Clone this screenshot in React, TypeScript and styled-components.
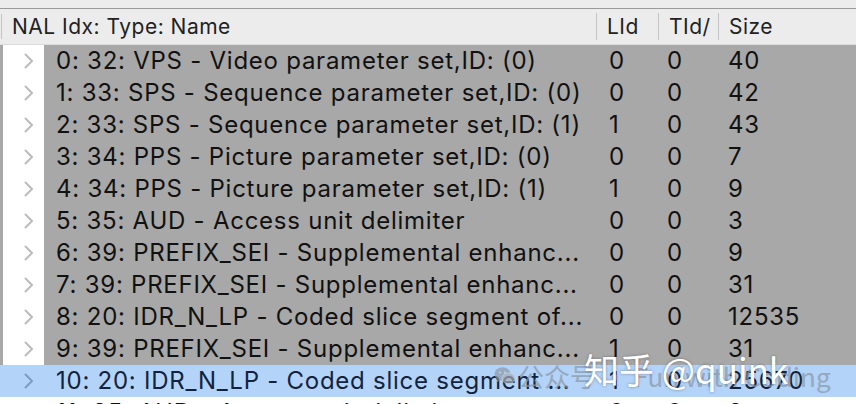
import React, { FC } from 'react'
import styled, { createGlobalStyle } from 'styled-components'

interface NalRow {
  name: string
  lid: number
  tid: number
  size: number
}

const ROWS: NalRow[] = [
  { name: '0: 32: VPS - Video parameter set,ID: (0)', lid: 0, tid: 0, size: 40 },
  { name: '1: 33: SPS - Sequence parameter set,ID: (0)', lid: 0, tid: 0, size: 42 },
  { name: '2: 33: SPS - Sequence parameter set,ID: (1)', lid: 1, tid: 0, size: 43 },
  { name: '3: 34: PPS - Picture parameter set,ID: (0)', lid: 0, tid: 0, size: 7 },
  { name: '4: 34: PPS - Picture parameter set,ID: (1)', lid: 1, tid: 0, size: 9 },
  { name: '5: 35: AUD - Access unit delimiter', lid: 0, tid: 0, size: 3 },
  { name: '6: 39: PREFIX_SEI - Supplemental enhanc...', lid: 0, tid: 0, size: 9 },
  { name: '7: 39: PREFIX_SEI - Supplemental enhanc...', lid: 0, tid: 0, size: 31 },
  { name: '8: 20: IDR_N_LP - Coded slice segment of...', lid: 0, tid: 0, size: 12535 },
  { name: '9: 39: PREFIX_SEI - Supplemental enhanc...', lid: 1, tid: 0, size: 31 },
  { name: '10: 20: IDR_N_LP - Coded slice segment ...', lid: 1, tid: 0, size: 25670 },
  { name: '11: 35: AUD - Access unit delimiter', lid: 0, tid: 0, size: 3 },
]

const SELECTED = 10
const MARKED_UNTIL = 9

type RowKind = 'marked' | 'selected' | 'plain'

const GlobalStyle = createGlobalStyle`
  html, body {
    margin: 0;
    padding: 0;
    background: #ffffff;
    overflow: hidden;
  }
  body {
    font-family: Inter, "Noto Sans", "Noto Sans CJK SC", sans-serif;
  }
`

const COLUMNS = '44px 553px 62px 60px 1fr'

const Chevron: FC<{ kind: RowKind }> = ({ kind }) => (
  <S.ChevronCell $kind={kind}>
    <svg width="10" height="16" viewBox="0 0 10 16">
      <polyline
        points="1.5,1.5 8,8 1.5,14.5"
        fill="none"
        stroke={kind === 'selected' ? '#7d9dc2' : '#bdbdbd'}
        strokeWidth="2"
        strokeLinecap="round"
        strokeLinejoin="round"
      />
    </svg>
  </S.ChevronCell>
)

const Row: FC<{ row: NalRow; kind: RowKind }> = ({ row, kind }) => (
  <S.Row $kind={kind}>
    <Chevron kind={kind} />
    <S.NameCell $kind={kind}>{row.name}</S.NameCell>
    <S.NumCell $kind={kind} $pad={12}>{row.lid}</S.NumCell>
    <S.NumCell $kind={kind} $pad={8}>{row.tid}</S.NumCell>
    <S.NumCell $kind={kind} $pad={9}>{row.size}</S.NumCell>
  </S.Row>
)

const WeChatIcon: FC = () => (
  <svg width="22" height="20" viewBox="0 0 22 20">
    <ellipse cx="8.5" cy="8" rx="8" ry="6.8" fill="#8f9aa6" />
    <path d="M3.5 13 L2.5 16.5 L6.5 14.2 Z" fill="#8f9aa6" />
    <ellipse cx="14.5" cy="12.5" rx="6.5" ry="5.5" fill="#a3acb6" stroke="#c9d2da" strokeWidth="0.8" />
    <circle cx="6" cy="6.5" r="1" fill="#d0d6dc" />
    <circle cx="11" cy="6.5" r="1" fill="#d0d6dc" />
  </svg>
)

const App: FC = () => {
  return (
    <>
      <GlobalStyle />
      <S.Window>
        <S.TopBand />
        <S.Header>
          <S.HeaderCell>NAL Idx: Type: Name</S.HeaderCell>
          <S.HeaderCell>LId</S.HeaderCell>
          <S.HeaderCell>TId/</S.HeaderCell>
          <S.HeaderCell>Size</S.HeaderCell>
        </S.Header>
        <S.Body>
          {ROWS.map((row, i) => (
            <Row
              key={i}
              row={row}
              kind={i === SELECTED ? 'selected' : i <= MARKED_UNTIL ? 'marked' : 'plain'}
            />
          ))}
        </S.Body>
        <S.Watermark>
          <WeChatIcon />
          <S.MarkFaint>公众号 · Fun with Coding</S.MarkFaint>
        </S.Watermark>
        <S.Signature>知乎 @quink</S.Signature>
      </S.Window>
    </>
  )
}

const rowBg = (kind: RowKind) =>
  kind === 'selected' ? '#b3d3f8' : kind === 'marked' ? '#a8a8a8' : '#ffffff'

const rowInk = (kind: RowKind) => (kind === 'selected' ? '#14233d' : '#111111')

const S = {
  Window: styled.div`
    position: relative;
    width: 856px;
    height: 404px;
    overflow: hidden;
    background: #ffffff;
  `,
  TopBand: styled.div`
    height: 8px;
    background: #ececec;
    border-bottom: 1px solid #9a9a9a;
  `,
  Header: styled.div`
    display: grid;
    grid-template-columns: 2px 595px 62px 60px 1fr;
    height: 35px;
    background: #ececec;
    border-bottom: 1px solid #dcdcdc;
    &::before {
      content: '';
      border-right: 1px solid #c4c4c4;
      margin: 5px 0;
    }
  `,
  HeaderCell: styled.div`
    display: flex;
    align-items: center;
    padding-left: 10px;
    font-size: 21px;
    letter-spacing: 0.5px;
    color: #222222;
    white-space: nowrap;
    overflow: hidden;
    border-right: 1px solid #c4c4c4;
    border-image: linear-gradient(transparent 5px, #c4c4c4 5px, #c4c4c4 calc(100% - 5px), transparent calc(100% - 5px)) 1;
    &:last-child {
      border-right: none;
    }
  `,
  Body: styled.div`
    display: flex;
    flex-direction: column;
  `,
  Row: styled.div<{ $kind: RowKind }>`
    display: grid;
    grid-template-columns: ${COLUMNS};
    height: 32px;
    flex-shrink: 0;
    background: ${(p) => rowBg(p.$kind)};
  `,
  ChevronCell: styled.div<{ $kind: RowKind }>`
    display: flex;
    align-items: center;
    padding-left: 21px;
    background: ${(p) => (p.$kind === 'selected' ? 'transparent' : '#ffffff')};
    border-left: 3px solid ${(p) => (p.$kind === 'marked' ? '#a8a8a8' : 'transparent')};
  `,
  NameCell: styled.div<{ $kind: RowKind }>`
    display: flex;
    align-items: center;
    padding-left: 12px;
    padding-bottom: 2px;
    font-size: 24px;
    letter-spacing: 0.75px;
    color: ${(p) => rowInk(p.$kind)};
    white-space: nowrap;
    overflow: hidden;
  `,
  NumCell: styled.div<{ $kind: RowKind; $pad: number }>`
    display: flex;
    align-items: center;
    padding-left: ${(p) => p.$pad}px;
    padding-bottom: 2px;
    font-size: 24px;
    letter-spacing: 0.75px;
    color: ${(p) => rowInk(p.$kind)};
    white-space: nowrap;
  `,
  Watermark: styled.div`
    position: absolute;
    left: 494px;
    top: 357px;
    display: flex;
    align-items: center;
    gap: 2px;
    opacity: 0.7;
  `,
  MarkFaint: styled.span`
    font-size: 26px;
    color: #8a96a3;
    font-family: "Noto Sans CJK SC", Inter, sans-serif;
    white-space: nowrap;
  `,
  Signature: styled.div`
    position: absolute;
    left: 584px;
    top: 343px;
    font-size: 35px;
    color: #ffffff;
    font-family: "Noto Sans CJK SC", Inter, sans-serif;
    text-shadow: 0 0 3px rgba(0, 0, 0, 0.35);
    white-space: nowrap;
  `,
}

export default App
